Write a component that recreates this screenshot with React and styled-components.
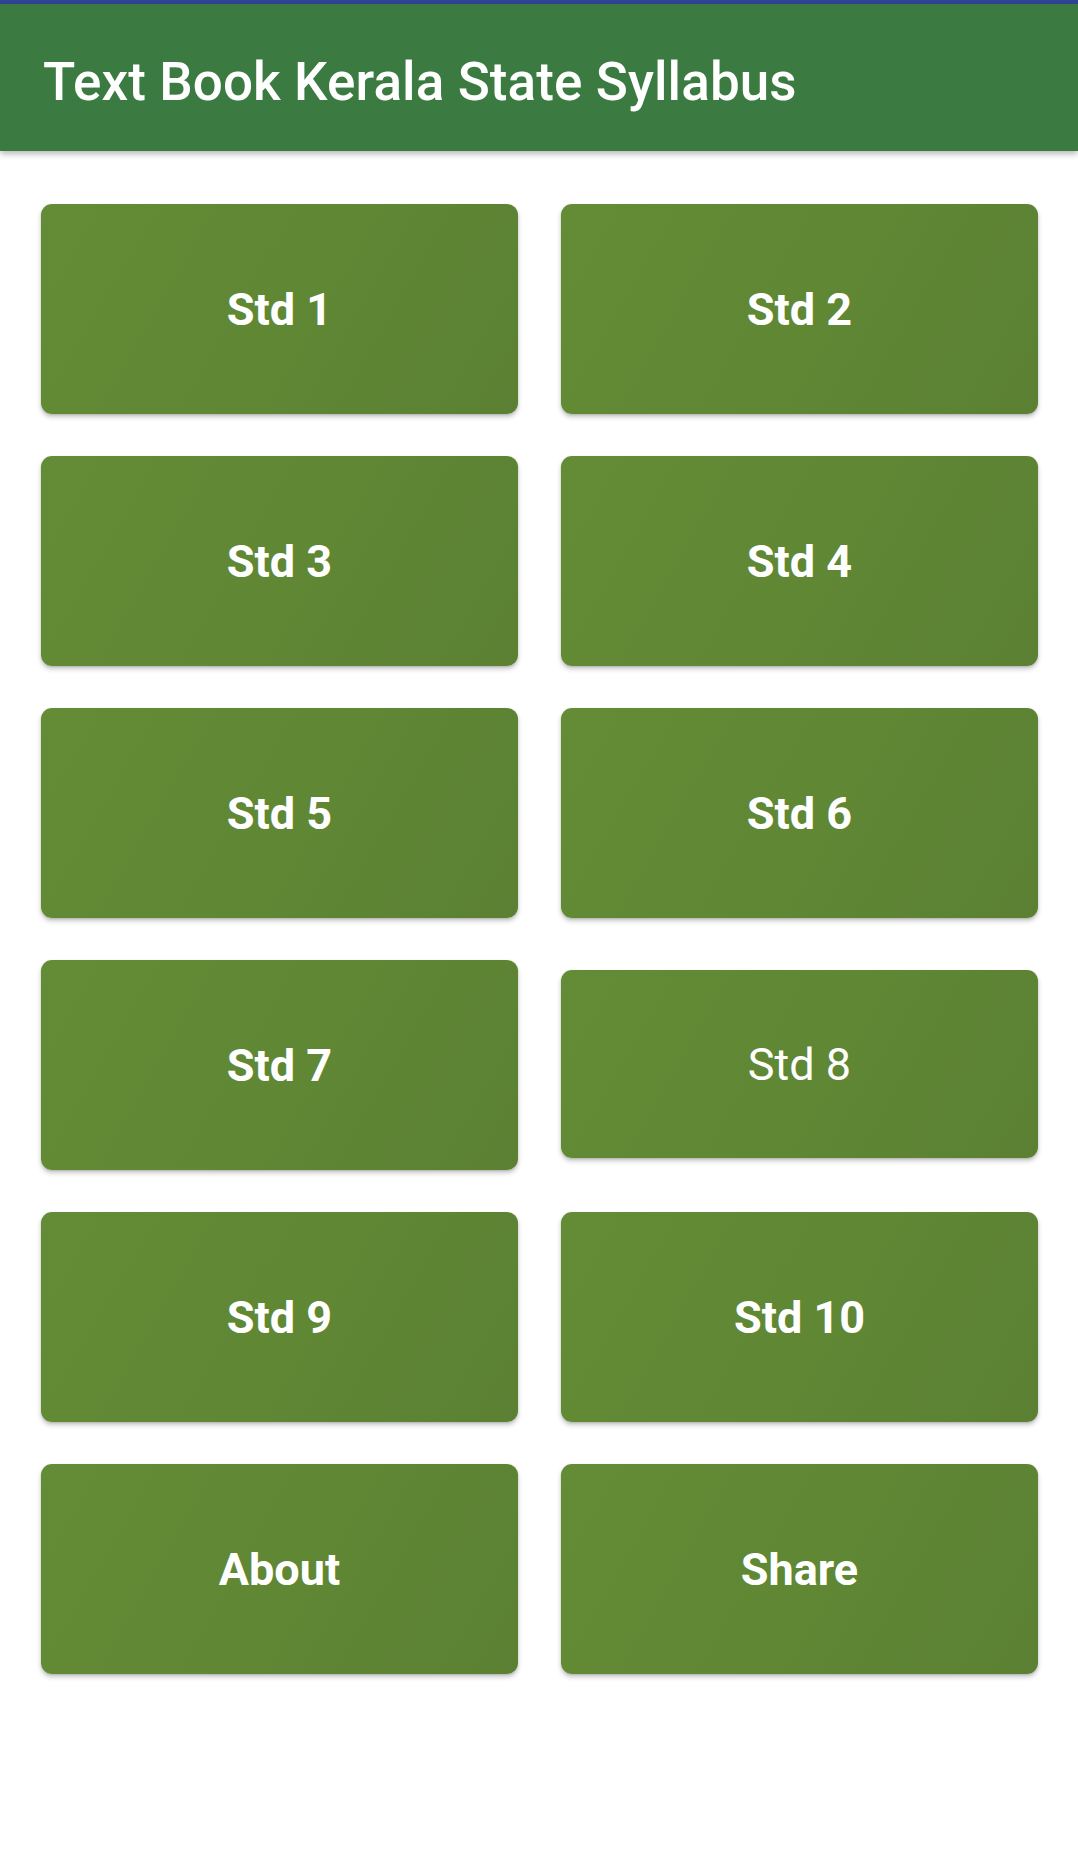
import React from "react";
import styled, { createGlobalStyle } from "styled-components";

const Global = createGlobalStyle`
  html, body { margin: 0; padding: 0; background: #ffffff; }
  body { font-family: Roboto, "Noto Sans", sans-serif; }
`;

const Page = styled.div`
  width: 1078px;
  min-height: 1859px;
  background: #ffffff;
`;

const StatusStrip = styled.div`
  height: 4px;
  background: #2f4596;
`;

const AppBar = styled.header`
  height: 147px;
  background: #3b7a40;
  display: flex;
  align-items: center;
  padding-left: 43px;
  box-shadow: 0 3px 6px rgba(0, 0, 0, 0.28);
  position: relative;
  z-index: 1;
`;

const Title = styled.h1`
  margin: 0;
  color: #ffffff;
  font-family: Roboto, sans-serif;
  font-weight: 500;
  font-size: 53px;
  letter-spacing: 0.1px;
  padding-top: 8px;
`;

const Grid = styled.main`
  display: grid;
  grid-template-columns: 477px 477px;
  column-gap: 43px;
  row-gap: 42px;
  padding: 53px 40px 0 41px;
`;

const Card = styled.button`
  height: ${(p) => (p.$pressed ? "188px" : "210px")};
  margin: ${(p) => (p.$pressed ? "10px 0 12px" : "0")};
  border: none;
  border-radius: 11px;
  background: linear-gradient(120deg, #648c36 0%, #5f8734 55%, #5b8033 100%);
  box-shadow: 0 3px 5px rgba(0, 0, 0, 0.22), 0 1px 2px rgba(0, 0, 0, 0.12);
  color: #ffffff;
  font-family: Roboto, sans-serif;
  font-weight: ${(p) => (p.$pressed ? 400 : 700)};
  font-size: 45px;
  display: flex;
  align-items: center;
  justify-content: center;
  padding: 0;
  cursor: pointer;
`;

const items = [
  "Std 1",
  "Std 2",
  "Std 3",
  "Std 4",
  "Std 5",
  "Std 6",
  "Std 7",
  "Std 8",
  "Std 9",
  "Std 10",
  "About",
  "Share",
];

export default function App() {
  return (
    <Page>
      <Global />
      <StatusStrip />
      <AppBar>
        <Title>Text Book Kerala State Syllabus</Title>
      </AppBar>
      <Grid>
        {items.map((label) => (
          <Card key={label} $pressed={label === "Std 8"}>
            {label}
          </Card>
        ))}
      </Grid>
    </Page>
  );
}
